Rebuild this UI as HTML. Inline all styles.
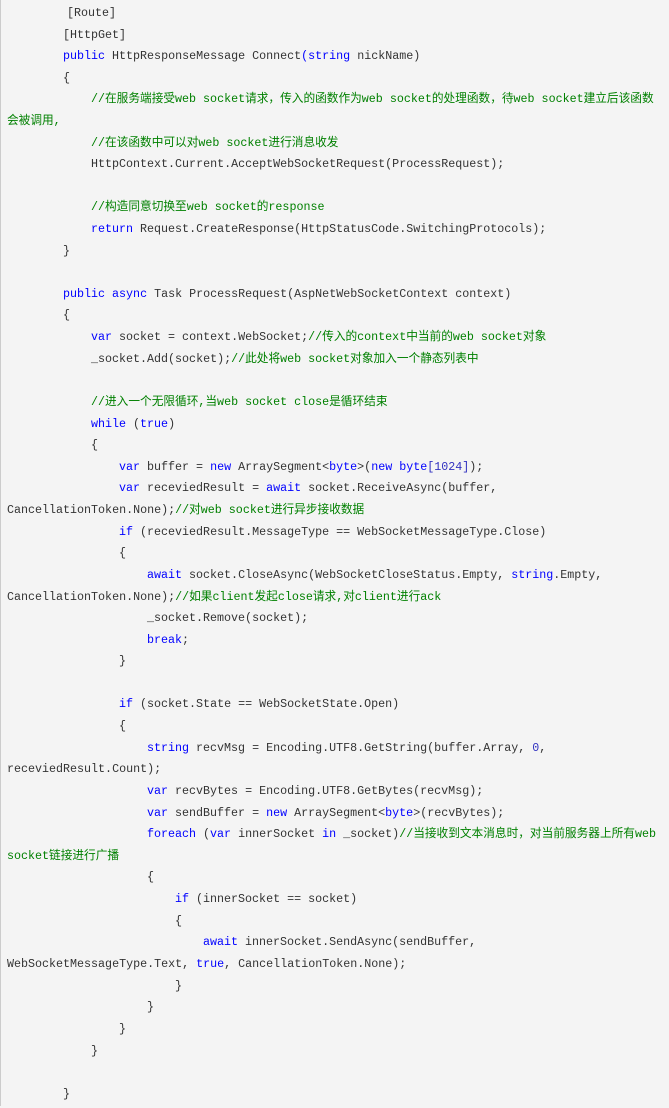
<!DOCTYPE html>
<html><head><meta charset="utf-8"><style>
html,body{margin:0;padding:0}
body{width:669px;height:1106px;background:#f4f4f4;border-left:1px solid #ccc;box-sizing:border-box;overflow:hidden;position:relative;font-family:"Liberation Mono","Noto Sans CJK SC",monospace;font-size:11.68px;color:#333}
.w{position:absolute;left:0;top:2px;width:669px;height:1106px}
.l{position:absolute;white-space:pre;height:21.6px;line-height:21.6px}
.k{color:#0000ff}.c{color:#008000}.n{color:#3030c0}
</style></head><body><div class="w">
<div class="l" style="top:1px;left:66px">[Route]</div>
<div class="l" style="top:23px;left:62px">[HttpGet]</div>
<div class="l" style="top:44px;left:62px"><span class="k">public</span> HttpResponseMessage Connect<span class="k">(string</span> nickName)</div>
<div class="l" style="top:66px;left:62px">{</div>
<div class="l" style="top:87px;left:90px"><span class="c">//在服务端接受web socket请求，传入的函数作为web socket的处理函数，待web socket建立后该函数</span></div>
<div class="l" style="top:109px;left:6px"><span class="c">会被调用,</span></div>
<div class="l" style="top:131px;left:90px"><span class="c">//在该函数中可以对web socket进行消息收发</span></div>
<div class="l" style="top:152px;left:90px">HttpContext.Current.AcceptWebSocketRequest(ProcessRequest);</div>
<div class="l" style="top:195px;left:90px"><span class="c">//构造同意切换至web socket的response</span></div>
<div class="l" style="top:217px;left:90px"><span class="k">return</span> Request.CreateResponse(HttpStatusCode.SwitchingProtocols);</div>
<div class="l" style="top:239px;left:62px">}</div>
<div class="l" style="top:282px;left:62px"><span class="k">public</span> <span class="k">async</span> Task ProcessRequest(AspNetWebSocketContext context)</div>
<div class="l" style="top:303px;left:62px">{</div>
<div class="l" style="top:325px;left:90px"><span class="k">var</span> socket = context.WebSocket;<span class="c">//传入的context中当前的web socket对象</span></div>
<div class="l" style="top:347px;left:90px">_socket.Add(socket);<span class="c">//此处将web socket对象加入一个静态列表中</span></div>
<div class="l" style="top:390px;left:90px"><span class="c">//进入一个无限循环,当web socket close是循环结束</span></div>
<div class="l" style="top:412px;left:90px"><span class="k">while</span> (<span class="k">true</span>)</div>
<div class="l" style="top:433px;left:90px">{</div>
<div class="l" style="top:455px;left:118px"><span class="k">var</span> buffer = <span class="k">new</span> ArraySegment&lt;<span class="k">byte</span>&gt;(<span class="k">new</span> <span class="k">byte</span><span class="n">[1024]</span>);</div>
<div class="l" style="top:476px;left:118px"><span class="k">var</span> receviedResult = <span class="k">await</span> socket.ReceiveAsync(buffer,</div>
<div class="l" style="top:498px;left:6px">CancellationToken.None);<span class="c">//对web socket进行异步接收数据</span></div>
<div class="l" style="top:520px;left:118px"><span class="k">if</span> (receviedResult.MessageType == WebSocketMessageType.Close)</div>
<div class="l" style="top:541px;left:118px">{</div>
<div class="l" style="top:563px;left:146px"><span class="k">await</span> socket.CloseAsync(WebSocketCloseStatus.Empty, <span class="k">string</span>.Empty,</div>
<div class="l" style="top:585px;left:6px">CancellationToken.None);<span class="c">//如果client发起close请求,对client进行ack</span></div>
<div class="l" style="top:606px;left:146px">_socket.Remove(socket);</div>
<div class="l" style="top:628px;left:146px"><span class="k">break</span>;</div>
<div class="l" style="top:649px;left:118px">}</div>
<div class="l" style="top:692px;left:118px"><span class="k">if</span> (socket.State == WebSocketState.Open)</div>
<div class="l" style="top:714px;left:118px">{</div>
<div class="l" style="top:736px;left:146px"><span class="k">string</span> recvMsg = Encoding.UTF8.GetString(buffer.Array, <span class="n">0</span>,</div>
<div class="l" style="top:757px;left:6px">receviedResult.Count);</div>
<div class="l" style="top:779px;left:146px"><span class="k">var</span> recvBytes = Encoding.UTF8.GetBytes(recvMsg);</div>
<div class="l" style="top:801px;left:146px"><span class="k">var</span> sendBuffer = <span class="k">new</span> ArraySegment&lt;<span class="k">byte</span>&gt;(recvBytes);</div>
<div class="l" style="top:822px;left:146px"><span class="k">foreach</span> (<span class="k">var</span> innerSocket <span class="k">in</span> _socket)<span class="c">//当接收到文本消息时，对当前服务器上所有web</span></div>
<div class="l" style="top:844px;left:6px"><span class="c">socket链接进行广播</span></div>
<div class="l" style="top:865px;left:146px">{</div>
<div class="l" style="top:887px;left:174px"><span class="k">if</span> (innerSocket == socket)</div>
<div class="l" style="top:909px;left:174px">{</div>
<div class="l" style="top:930px;left:202px"><span class="k">await</span> innerSocket.SendAsync(sendBuffer,</div>
<div class="l" style="top:952px;left:6px">WebSocketMessageType.Text, <span class="k">true</span>, CancellationToken.None);</div>
<div class="l" style="top:974px;left:174px">}</div>
<div class="l" style="top:995px;left:146px">}</div>
<div class="l" style="top:1017px;left:118px">}</div>
<div class="l" style="top:1039px;left:90px">}</div>
<div class="l" style="top:1082px;left:62px">}</div>
</div></body></html>
